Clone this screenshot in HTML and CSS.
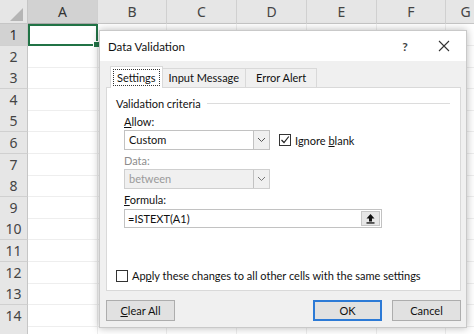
FILE: index.html
```html
<!DOCTYPE html>
<html lang="en">
<head>
    <meta charset="UTF-8">
    <title>Data Validation</title>
    <link rel="stylesheet" href="styles.css">
</head>
<body>

<!-- Worksheet behind the dialog -->
<div class="sheet">
    <div class="corner"><span class="corner-mark"></span></div>
    <div class="col-head active">A</div>
    <div class="col-head">B</div>
    <div class="col-head">C</div>
    <div class="col-head">D</div>
    <div class="col-head">E</div>
    <div class="col-head">F</div>
    <div class="col-head">G</div>
</div>
<div class="rows" id="rows"></div>

<!-- Data Validation dialog -->
<div class="dialog">
    <div class="title-bar">
        <span class="title">Data Validation</span>
        <span class="title-help">?</span>
        <span class="title-close">
            <svg width="12" height="12" viewBox="0 0 12 12"><path d="M1 1 L11 11 M11 1 L1 11" stroke="#333" stroke-width="1.1" fill="none"/></svg>
        </span>
    </div>

    <div class="dialog-body">
        <div class="tabs">
            <div class="tab selected"><span class="focus">Settings</span></div>
            <div class="tab">Input Message</div>
            <div class="tab wide">Error Alert</div>
        </div>

        <div class="panel">
            <div class="group-title">
                <span>Validation criteria</span>
                <span class="group-line"></span>
            </div>

            <div class="field">
                <div class="label"><u>A</u>llow:</div>
                <div class="field-row">
                    <div class="select">
                        <span class="select-text">Custom</span>
                        <span class="select-arrow">
                            <svg width="9" height="6" viewBox="0 0 9 6"><path d="M1 1 L4.5 4.5 L8 1" stroke="#555" stroke-width="1" fill="none"/></svg>
                        </span>
                    </div>
                    <label class="check">
                        <span class="box checked">
                            <svg width="10" height="10" viewBox="0 0 10 10"><path d="M1.5 5 L4 7.5 L8.8 1.5" stroke="#222" stroke-width="1.2" fill="none"/></svg>
                        </span>
                        <span>Ignore <u>b</u>lank</span>
                    </label>
                </div>
            </div>

            <div class="field">
                <div class="label disabled">Data:</div>
                <div class="select disabled">
                    <span class="select-text">between</span>
                    <span class="select-arrow">
                        <svg width="9" height="6" viewBox="0 0 9 6"><path d="M1 1 L4.5 4.5 L8 1" stroke="#777" stroke-width="1" fill="none"/></svg>
                    </span>
                </div>
            </div>

            <div class="field">
                <div class="label"><u>F</u>ormula:</div>
                <div class="formula">
                    <span class="formula-text">=ISTEXT(A1)</span>
                    <span class="formula-btn">
                        <svg width="11" height="11" viewBox="0 0 11 11"><path d="M5.5 1 L9.5 5.5 H7 V8.5 H4 V5.5 H1.5 Z" fill="#111"/><rect x="1.5" y="9.3" width="8" height="1.3" fill="#111"/></svg>
                    </span>
                </div>
            </div>

            <label class="check apply">
                <span class="box"></span>
                <span>Ap<u>p</u>ly these changes to all other cells with the same settings</span>
            </label>
        </div>

        <div class="buttons">
            <button class="btn"><u>C</u>lear All</button>
            <span class="spacer"></span>
            <button class="btn default">OK</button>
            <button class="btn">Cancel</button>
        </div>
    </div>
</div>

<script>
    const rows = document.getElementById("rows");
    for (let i = 1; i <= 15; i++) {
        let row = document.createElement("div");
        row.classList.add("row");
        let head = document.createElement("div");
        head.classList.add("row-head");
        if (i === 1) head.classList.add("active");
        // the last row only peeks in at the bottom edge
        head.textContent = i < 15 ? i : "";
        row.appendChild(head);
        for (let c = 0; c < 7; c++) {
            let cell = document.createElement("div");
            cell.classList.add("cell");
            if (i === 1 && c === 0) cell.classList.add("selected");
            row.appendChild(cell);
        }
        rows.appendChild(row);
    }
</script>

</body>
</html>
```

FILE: styles.css
```css
/* Basic Reset */
* {
    margin: 0;
    padding: 0;
    box-sizing: border-box;
}
body {
    font-family: 'Noto Sans', Arial, sans-serif;
    background-color: #ffffff;
    color: #222;
    width: 474px;
    height: 334px;
    overflow: hidden;
    position: relative;
}

/* Worksheet */
.sheet, .row {
    display: grid;
    grid-template-columns: 28px 70px 69px 70px 70px 70px 69px 40px;
}
.sheet {
    height: 24px;
    background: #e6e6e6;
    border-bottom: 1px solid #c6c6c6;
}
.corner {
    position: relative;
    border-right: 1px solid #c6c6c6;
}
.corner-mark {
    position: absolute;
    right: 4px;
    bottom: 4px;
    width: 0;
    height: 0;
    border-left: 13px solid transparent;
    border-bottom: 13px solid #b5b5b5;
}
.col-head {
    font-size: 14px;
    color: #444;
    text-align: center;
    line-height: 23px;
    border-right: 1px solid #d0d0d0;
}
.col-head.active {
    background: #d2d2d2;
    color: #333;
    border-bottom: 2px solid #a8a8a8;
}
.row {
    height: 21.6px;
}
.row-head {
    background: #e6e6e6;
    font-size: 14px;
    color: #444;
    text-align: center;
    line-height: 21px;
    border-right: 1px solid #c6c6c6;
    border-bottom: 1px solid #d0d0d0;
}
.row-head.active {
    background: #d2d2d2;
    color: #333;
}
.cell {
    border-right: 1px solid #eeeeee;
    border-bottom: 1px solid #eeeeee;
}
.cell.selected {
    border: 2px solid #217346;
    position: relative;
}
.cell.selected::after {
    content: "";
    position: absolute;
    right: -4px;
    bottom: -4px;
    width: 5px;
    height: 5px;
    background: #217346;
    border: 1px solid #fff;
}

/* Dialog */
.dialog {
    position: absolute;
    left: 99px;
    top: 30px;
    width: 368px;
    height: 298px;
    background: #f0f0f0;
    border: 1px solid #c9c9c9;
    box-shadow: 0 0 8px rgba(0, 0, 0, 0.28);
    font-family: Lato, 'Noto Sans', sans-serif;
    font-size: 11px;
    color: #111;
    display: flex;
    flex-direction: column;
}
.title-bar {
    height: 30px;
    background: #ffffff;
    display: flex;
    align-items: center;
    padding-left: 8px;
}
.title {
    flex: 1;
    font-size: 11.5px;
    padding-top: 1px;
}
.title-help {
    font-size: 12px;
    font-weight: bold;
    color: #444;
    width: 42px;
    text-align: center;
}
.title-close {
    width: 40px;
    display: flex;
    justify-content: center;
    padding-right: 4px;
}
.dialog-body {
    flex: 1;
    padding: 5px 5px 0 6px;
    display: flex;
    flex-direction: column;
}

/* Tabs */
.tabs {
    display: flex;
    padding-left: 4px;
    height: 21px;
    align-items: flex-end;
    position: relative;
    z-index: 1;
}
.tab {
    height: 19px;
    padding: 0 6px;
    line-height: 18px;
    border: 1px solid #d9d9d9;
    border-bottom: none;
    border-left: none;
    background: #f0f0f0;
}
.tab.wide {
    padding: 0 10px;
}
.tab.selected {
    background: #ffffff;
    border-left: 1px solid #d9d9d9;
    padding: 2px 2px 0 2px;
    margin-bottom: -1px;
    height: 22px;
}
.focus {
    display: inline-block;
    border: 1px dotted #333;
    padding: 0 3px;
    line-height: 15px;
}

.panel {
    height: 204px;
    background: #ffffff;
    border: 1px solid #d9d9d9;
    padding: 7px 8px 0 9px;
    display: flex;
    flex-direction: column;
}
.group-title {
    display: flex;
    align-items: center;
    gap: 6px;
    height: 16px;
}
.group-line {
    flex: 1;
    height: 1px;
    background: #dcdcdc;
    margin-right: 2px;
}
.field {
    padding-left: 8px;
    margin-top: 3px;
}
.label {
    line-height: 15px;
    height: 16px;
}
.label.disabled {
    color: #8d8d8d;
}
.field-row {
    display: flex;
    align-items: center;
    gap: 9px;
}
.select {
    width: 146px;
    height: 20px;
    border: 1px solid #c2c2c2;
    background: #ffffff;
    display: flex;
    align-items: stretch;
}
.select.disabled {
    background: #f0f0f0;
    color: #9a9a9a;
    border-color: #cfcfcf;
}
.select-text {
    flex: 1;
    padding-left: 4px;
    line-height: 18px;
}
.select-arrow {
    width: 16px;
    border-left: 1px solid #c2c2c2;
    background: #f0f0f0;
    display: flex;
    align-items: center;
    justify-content: center;
}
.check {
    display: flex;
    align-items: center;
    gap: 4px;
    white-space: nowrap;
}
.box {
    width: 12px;
    height: 12px;
    border: 1px solid #333;
    background: #fff;
    display: flex;
    align-items: center;
    justify-content: center;
}
.formula {
    width: 258px;
    height: 19px;
    border: 1px solid #c2c2c2;
    background: #ffffff;
    display: flex;
    margin-top: 1px;
}
.formula-text {
    flex: 1;
    padding-left: 3px;
    line-height: 17px;
}
.formula-btn {
    width: 19px;
    margin: 1px;
    background: #e6e6e6;
    border: 1px solid #c6c6c6;
    display: flex;
    align-items: center;
    justify-content: center;
}
.check.apply {
    margin-top: auto;
    margin-bottom: 8px;
}

/* Bottom buttons */
.buttons {
    display: flex;
    margin-top: 9px;
    gap: 10px;
}
.spacer {
    flex: 1;
}
.btn {
    width: 69px;
    height: 21px;
    font-family: inherit;
    font-size: 11px;
    color: #111;
    background: #e1e1e1;
    border: 1px solid #adadad;
}
.btn.default {
    border: 2px solid #2c7ad6;
}
```
